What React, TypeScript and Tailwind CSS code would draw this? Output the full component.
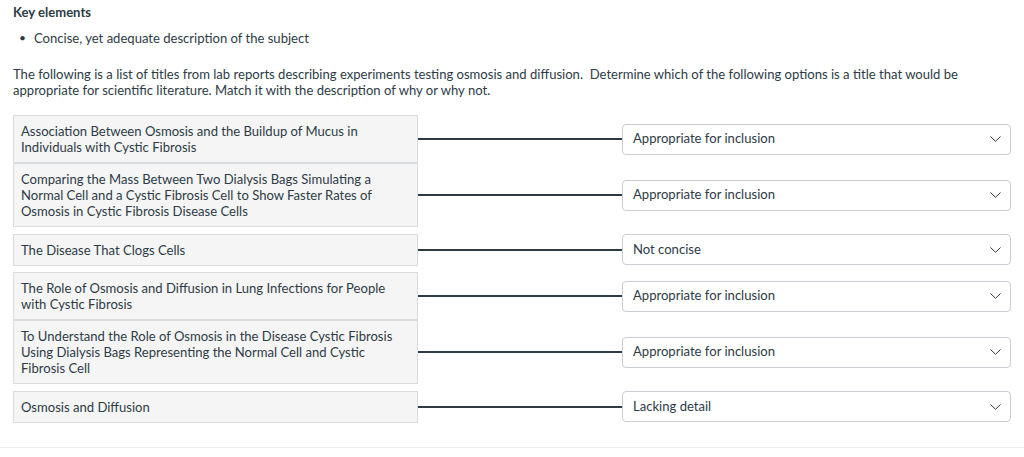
import React from "react";

const rows: { title: string; answer: string }[] = [
  { title: "Association Between Osmosis and the Buildup of Mucus in Individuals with Cystic Fibrosis", answer: "Appropriate for inclusion" },
  { title: "Comparing the Mass Between Two Dialysis Bags Simulating a Normal Cell and a Cystic Fibrosis Cell to Show Faster Rates of Osmosis in Cystic Fibrosis Disease Cells", answer: "Appropriate for inclusion" },
  { title: "The Disease That Clogs Cells", answer: "Not concise" },
  { title: "The Role of Osmosis and Diffusion in Lung Infections for People with Cystic Fibrosis", answer: "Appropriate for inclusion" },
  { title: "To Understand the Role of Osmosis in the Disease Cystic Fibrosis Using Dialysis Bags Representing the Normal Cell and Cystic Fibrosis Cell", answer: "Appropriate for inclusion" },
  { title: "Osmosis and Diffusion", answer: "Lacking detail" },
];

function Chevron() {
  return (
    <svg width="11" height="6" viewBox="0 0 11 6" fill="none">
      <path d="M0.5 0.5 L5.5 5.3 L10.5 0.5" stroke="#2d3b45" strokeWidth="1" />
    </svg>
  );
}

export default function App() {
  return (
    <div className="w-[1024px] h-[457px] bg-white text-[#2d3b45] text-[13.07px] font-['Lato','Noto_Sans',sans-serif] overflow-hidden">
      <div className="px-[13px] pt-[4px]">
        <p className="font-bold leading-[16px]">Key elements</p>
        <ul className="mt-[10px] leading-[16px]">
          <li className="flex items-center">
            <span className="ml-[6px] w-[15px] text-[12px]">•</span>
            <span>Concise, yet adequate description of the subject</span>
          </li>
        </ul>
        <p className="mt-[20px] leading-[16px] pr-[40px]">
          The following is a list of titles from lab reports describing experiments testing osmosis and diffusion.&nbsp; Determine which of the following options is a title that would be appropriate for scientific literature. Match it with the description of why or why not.
        </p>
        <div className="mt-[17px]">
          {rows.map((r, i) => (
            <div key={i} className="flex items-center min-h-[45px]">
              <div className="w-[405px] bg-[#f5f5f5] border border-[#d9dcde] px-[7px] py-[7px] leading-[16px]">
                {r.title}
              </div>
              <div className="flex-1 h-[2px] bg-[#2d3b45]" />
              <div className="w-[389px] h-[31px] bg-white border border-[#c7cdd1] rounded-[4px] flex items-center justify-between pl-[10px] pr-[9px]">
                <span>{r.answer}</span>
                <Chevron />
              </div>
            </div>
          ))}
        </div>
      </div>
      <div className="mt-[18px] border-t border-[#ececec]" />
    </div>
  );
}
